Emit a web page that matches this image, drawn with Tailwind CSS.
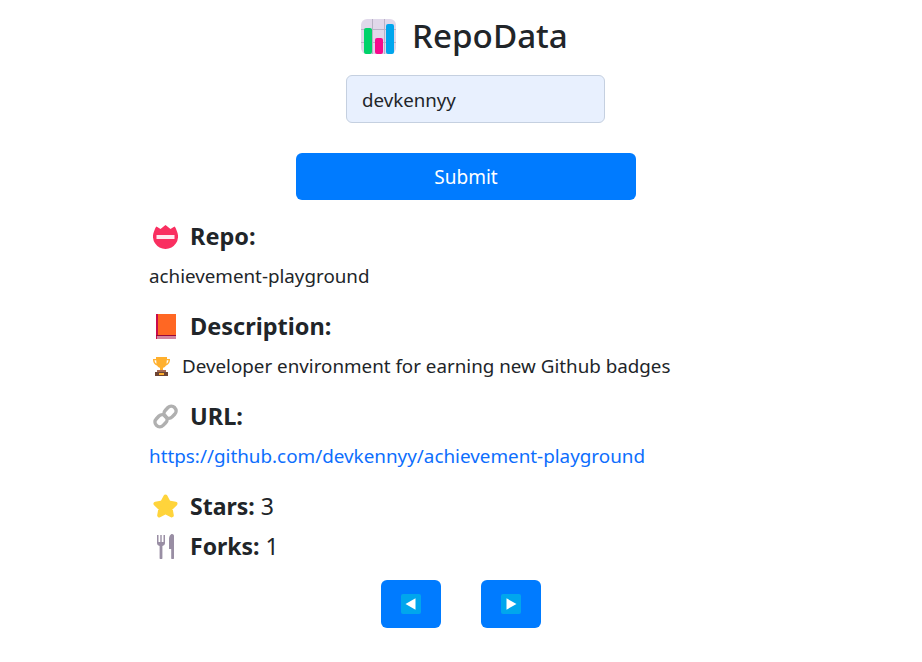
<!DOCTYPE html>
<html lang="en">
<head>
    <meta charset="UTF-8">
    <meta name="viewport" content="width=device-width, initial-scale=1.0">
    <title>RepoData</title>
    <script src="https://cdn.jsdelivr.net/npm/@tailwindcss/browser@4"></script>
</head>
<body class="bg-white font-['Noto_Sans','Open_Sans',sans-serif] text-[#212529] overflow-hidden">
    <div class="h-[662px] pl-[149px] pt-[13px]">
        <!-- Title -->
        <div class="flex items-center h-[46px] pl-[212px] gap-[16px]">
            <svg class="w-[35px] h-[35px]" viewBox="0 0 35 35">
                <rect width="35" height="35" rx="6" fill="#e0d8ea"/>
                <path d="M11.5 0v35M23.5 0v35M0 10.5h35M0 23.5h35" stroke="#b9b2c6" stroke-width="1"/>
                <rect x="3" y="9" width="8" height="26" rx="2" fill="#00d26a"/>
                <rect x="14" y="19" width="8" height="16" rx="2" fill="#f70a8d"/>
                <rect x="25" y="5" width="8" height="30" rx="2" fill="#00a6ed"/>
            </svg>
            <h1 class="text-[33.2px] leading-[46px] font-medium">RepoData</h1>
        </div>
        <!-- Form -->
        <input value="devkennyy" class="block mt-[16px] ml-[197px] w-[259px] h-[48px] pl-[15px] pr-[16px] text-[18.7px] bg-[#e8f0fe] border border-[#c5d0e0] rounded-md outline-none">
        <button class="block mt-[30px] ml-[147px] w-[340px] h-[47px] pt-[2px] bg-[#007bff] text-white text-[19px] rounded-md">Submit</button>
        <!-- Details -->
        <div class="mt-[17px]">
            <div class="flex items-center h-[38px] gap-[12px] pl-[4px]">
                <svg class="w-[25px] h-[25px]" viewBox="0 0 25 25">
                    <path d="M12.5 25A12.500 12.500 0 0 1 1 7.500C2 5 2.500 3 3.500 2.500L7.500 5 12.500 1l5 4 4-2.500c1 .5 1.500 2.500 2.500 5A12.500 12.500 0 0 1 12.500 25z" fill="#f92f60"/>
                    <rect x="3.500" y="11" width="18" height="4" fill="#ffe9ef"/>
                </svg>
                <h2 class="pt-[2px] text-[23.5px] font-bold">Repo:</h2>
            </div>
            <p class="mt-[6px] h-[30px] leading-[30px] text-[18.8px]">achievement-playground</p>
            <div class="flex items-center h-[38px] mt-[16px] gap-[12px] pl-[4px]">
                <svg class="w-[25px] h-[25px]" viewBox="0 0 25 25">
                    <rect x="3" y="0" width="20" height="25" fill="#ca0b4a"/>
                    <rect x="5" y="0" width="18" height="21" fill="#ff6723"/>
                    <rect x="3" y="21" width="20" height="1" fill="#990838"/>
                    <rect x="4" y="22" width="19" height="3" fill="#d3839f"/>
                </svg>
                <h2 class="pt-[2px] text-[23.5px] font-bold">Description:</h2>
            </div>
            <p class="mt-[6px] h-[30px] flex items-center gap-[12px] text-[18.8px]">
                <svg class="ml-[4px] w-[17px] h-[20px]" viewBox="0 0 17 20">
                    <path d="M3 1h11v2h3c0 4-2 6-4 6.500-1 1.500-2 2-3 2.500v2H7v-2c-1-.5-2-1-3-2.500C2 9 0 7 0 3h3zM1.500 4.300c.2 2 1 3 2 3.500L3.200 4.300zM15.500 4.300h-1.700L13.500 7.800c1-.5 1.800-1.500 2-3.500z" fill="#ffb02e"/>
                    <rect x="4" y="14" width="9" height="2" fill="#a56953"/>
                    <rect x="2" y="16" width="13" height="4" fill="#6d4534"/>
                    <rect x="6" y="17" width="5" height="2" fill="#ffb02e"/>
                </svg>
                <span>Developer environment for earning new Github badges</span>
            </p>
            <div class="flex items-center h-[38px] mt-[16px] gap-[12px] pl-[4px]">
                <svg class="w-[25px] h-[25px]" viewBox="0 0 25 25" fill="none" stroke="#b0b0b0" stroke-width="3.500">
                    <rect x="1.500" y="12" width="13" height="9.500" rx="4.700" transform="rotate(-45 8 16.700)"/>
                    <rect x="10.500" y="3.500" width="13" height="9.500" rx="4.700" transform="rotate(-45 17 8.200)"/>
                </svg>
                <h2 class="pt-[2px] text-[23.5px] font-bold">URL:</h2>
            </div>
            <a href="#" class="block mt-[6px] h-[30px] leading-[30px] text-[18.85px] text-[#0d6efd]">https://github.com/devkennyy/achievement-playground</a>
            <div class="flex items-center h-[38px] mt-[16px] gap-[12px] pl-[4px] text-[23px]">
                <svg class="w-[25px] h-[25px]" viewBox="0 0 25 25">
                    <path d="M12.500 2.500l3.200 6 6.800 1.200-4.900 4.800 1.200 6.900-6.300-3.200-6.300 3.200 1.200-6.900-4.900-4.800 6.800-1.200z" fill="#ffd43b" stroke="#ffd43b" stroke-width="4" stroke-linejoin="round"/>
                </svg>
                <p><b>Stars:</b> 3</p>
            </div>
            <div class="flex items-center h-[38px] mt-[2px] gap-[12px] pl-[4px] text-[23px]">
                <svg class="w-[25px] h-[25px]" viewBox="0 0 25 25">
                    <path d="M4 1h1.500v7h1.800V1h1.400v7h1.800V1H12v8c0 1.500-1 2.500-2.600 3V24a1.400 1.400 0 0 1-2.800 0V12C5 11.500 4 10.500 4 9z" fill="#998ea4"/>
                    <path d="M19 0c1.500 0 2 1 2 2v22a1.400 1.400 0 0 1-2.800 0v-9H16V5c0-2.500 1.500-5 3-5z" fill="#998ea4"/>
                </svg>
                <p><b>Forks:</b> 1</p>
            </div>
        </div>
        <!-- Pager -->
        <div class="flex gap-[40px] ml-[232px] mt-[15px]">
            <button class="w-[60px] h-[48px] bg-[#007bff] rounded-md flex items-center justify-center">
                <svg class="w-[20px] h-[20px]" viewBox="0 0 20 20">
                    <rect width="20" height="20" rx="2" fill="#00a6ed"/>
                    <path d="M14.500 4.300v11.400L4.500 10z" fill="#fff"/>
                </svg>
            </button>
            <button class="w-[60px] h-[48px] bg-[#007bff] rounded-md flex items-center justify-center">
                <svg class="w-[20px] h-[20px]" viewBox="0 0 20 20">
                    <rect width="20" height="20" rx="2" fill="#00a6ed"/>
                    <path d="M5.500 4.300v11.400L15.500 10z" fill="#fff"/>
                </svg>
            </button>
        </div>
    </div>
</body>
</html>
